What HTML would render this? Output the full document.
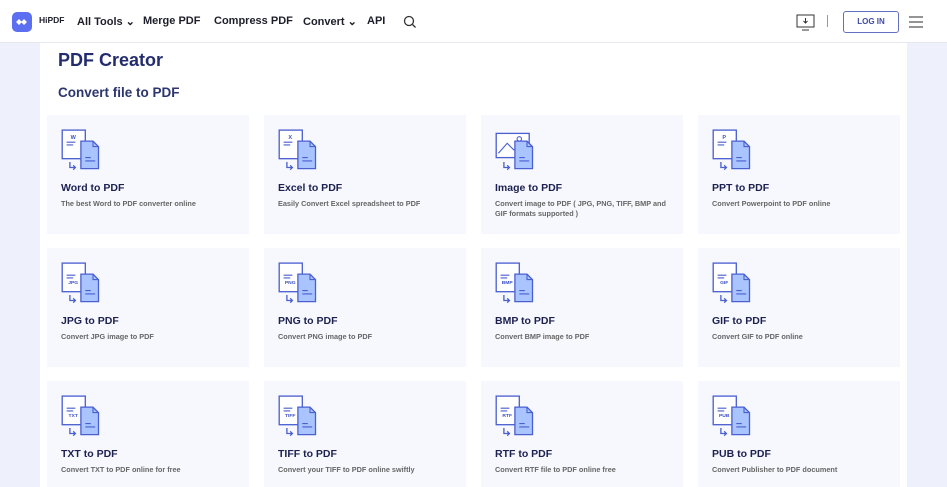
<!DOCTYPE html>
<html style="height:487px;overflow:hidden"><head><meta charset="utf-8"><style>
*{margin:0;padding:0;box-sizing:border-box}
body{width:947px;height:487px;overflow:hidden;background:#eef0fb;font-family:"Liberation Sans",Arial,sans-serif;position:relative}
.hdr{position:absolute;left:0;top:0;width:947px;height:43px;background:#fff;border-bottom:1px solid #e6e8ef;z-index:2}
.hdr span{position:absolute;top:15px;font-size:11px;font-weight:bold;color:#1e1e2a}
.main{position:absolute;left:40px;top:43px;width:867px;height:444px;background:#fff}
h1{position:absolute;left:58px;top:50px;font-size:18px;color:#232d6e;font-weight:bold}
h2{position:absolute;left:58px;top:85px;font-size:13.5px;color:#2c366e;font-weight:bold}
.card{position:absolute;width:202px;height:119px;background:#f7f8fd}
.card svg{position:absolute;left:14px;top:14px}
.card b{position:absolute;left:14px;top:67px;font-size:10.5px;color:#1c2150}
.card p{position:absolute;left:14px;top:84px;width:180px;font-size:7.3px;line-height:10px;color:#666;font-weight:bold}
</style></head><body>
<div class="hdr">
<div style="position:absolute;left:12px;top:12px;width:20px;height:20px;border-radius:5px;background:#5b6ff0"></div>
<svg style="position:absolute;left:15px;top:17px" width="14" height="10"><path d="M1 5l3-3 3 3-3 3zM6 5l3-3 3 3-3 3z" fill="#fff"/></svg>
<span style="left:39px;font-size:8.5px">HiPDF</span>
<span style="left:77px">All Tools ⌄</span>
<span style="left:143px">Merge PDF</span>
<span style="left:214px">Compress PDF</span>
<span style="left:303px">Convert ⌄</span>
<span style="left:367px">API</span>
<svg style="position:absolute;left:403px;top:15px" width="14" height="14"><circle cx="6" cy="6" r="4.5" fill="none" stroke="#333" stroke-width="1.3"/><path d="M9.5 9.5l3 3" stroke="#333" stroke-width="1.3"/></svg>
<svg style="position:absolute;left:796px;top:14px" width="20" height="18"><rect x="1" y="1" width="17" height="12" fill="none" stroke="#333"/><path d="M9.5 4v5M7.5 7l2 2 2-2M6 16h7" stroke="#333" fill="none"/></svg>
<div style="position:absolute;left:827px;top:15px;width:1px;height:12px;background:#999"></div>
<div style="position:absolute;left:843px;top:11px;width:56px;height:22px;border:1px solid #6470c0;border-radius:3px;font-size:8px;font-weight:bold;color:#3d4aa8;text-align:center;line-height:20px">LOG IN</div>
<svg style="position:absolute;left:908px;top:15px" width="16" height="14"><path d="M1 2h14M1 7h14M1 12h14" stroke="#555" stroke-width="1.2"/></svg>
</div>
<div class="main"></div>
<h1>PDF Creator</h1>
<h2>Convert file to PDF</h2>
<div id="g"></div>
<script>
var d=[["W","Word to PDF","The best Word to PDF converter online"],["X","Excel to PDF","Easily Convert Excel spreadsheet to PDF"],["IMG","Image to PDF","Convert image to PDF ( JPG, PNG, TIFF, BMP and GIF formats supported )"],["P","PPT to PDF","Convert Powerpoint to PDF online"],
["JPG","JPG to PDF","Convert JPG image to PDF"],["PNG","PNG to PDF","Convert PNG image to PDF"],["BMP","BMP to PDF","Convert BMP image to PDF"],["GIF","GIF to PDF","Convert GIF to PDF online"],
["TXT","TXT to PDF","Convert TXT to PDF online for free"],["TIFF","TIFF to PDF","Convert your TIFF to PDF online swiftly"],["RTF","RTF to PDF","Convert RTF file to PDF online free"],["PUB","PUB to PDF","Convert Publisher to PDF document"]];
var xs=[47,264,481,698],ys=[115,248,381],h="";
d.forEach(function(c,i){var x=xs[i%4],y=ys[Math.floor(i/4)];
var lab=c[0]=="IMG"?'':'<text x="11" y="'+(c[0].length<2?9:20)+'" font-size="'+(c[0].length<2?5:4.5)+'" font-family="Liberation Sans" font-weight="bold" fill="#3b4fc4" text-anchor="middle">'+c[0]+'</text>';
var back=c[0]=="IMG"?'<rect x="1" y="4" width="30" height="22" fill="#fff" stroke="#4a5fd0" stroke-width="1.2"/><path d="M3 22l8-9 6 6 4-3 8 6" fill="none" stroke="#4a5fd0"/><circle cx="22" cy="9" r="2" fill="none" stroke="#4a5fd0"/>':'<rect x="1" y="1" width="21" height="26" fill="#fff" stroke="#4a5fd0" stroke-width="1.2"/><path d="M5 12h8M5 14.5h6" stroke="#4a5fd0"/>'+lab;
h+='<div class="card" style="left:'+x+'px;top:'+y+'px"><svg width="42" height="44" viewBox="0 0 38 40">'+back+'<path d="M18 11h11l5 5v20H18z" fill="#a9c4ff" stroke="#4a5fd0" stroke-width="1.2"/><path d="M29 11v5h5M22 26h5M22 29h9" stroke="#4a5fd0" fill="none"/><path d="M8 30v5h5M11 33l2 2-2 2" stroke="#4a5fd0" fill="none" stroke-width="1.2"/></svg><b>'+c[1]+'</b><p>'+c[2]+'</p></div>';});
document.getElementById("g").innerHTML=h;
</script>
</body></html>
